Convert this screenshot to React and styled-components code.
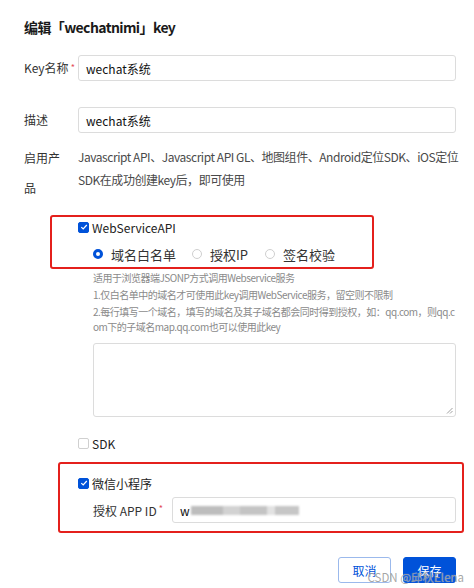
import React from "react";
import styled, { createGlobalStyle } from "styled-components";

const GlobalStyle = createGlobalStyle`
  body {
    margin: 0;
    background: #fff;
    font-family: "Noto Sans CJK SC", "Liberation Sans", sans-serif;
    color: #222;
  }
`;

const Page = styled.div`
  position: relative;
  width: 474px;
  height: 588px;
  box-sizing: border-box;
  padding: 17px 18px 0 24px;
  overflow: hidden;
`;

const Title = styled.h2`
  margin: 0 0 18px;
  font-size: 14px;
  line-height: 20px;
  font-weight: bold;
  letter-spacing: -0.6px;
  color: #1a1a1a;
`;

const Row = styled.div`
  display: flex;
  align-items: ${(p) => (p.$top ? "flex-start" : "center")};
  margin-bottom: ${(p) => p.$gap || 0}px;
`;

const Label = styled.div`
  width: 54px;
  flex: none;
  font-size: 12px;
  line-height: ${(p) => p.$lh || 20}px;
  color: #333;
  white-space: nowrap;
`;

const Star = styled.span`
  color: #e34d59;
  font-size: 9px;
  vertical-align: top;
  margin-left: 2px;
`;

const Input = styled.div`
  flex: 1;
  height: 26px;
  box-sizing: border-box;
  border: 1px solid #dcdcdc;
  border-radius: 3px;
  padding: 0 7px;
  display: flex;
  align-items: center;
  font-size: 12px;
  color: #111;
`;

const Products = styled.div`
  flex: 1;
  padding-top: 2px;
  font-size: 12px;
  line-height: 23px;
  letter-spacing: -0.45px;
  color: #4a4a4a;
  white-space: nowrap;
`;

const Block = styled.div`
  position: relative;
  margin: ${(p) => p.$m || "0"};
  padding-left: 54px;
`;

const Highlight = styled.div`
  position: absolute;
  border: 2px solid #e4201c;
  border-radius: 3px;
  pointer-events: none;
`;

const Check = styled.div`
  display: flex;
  align-items: center;
  gap: 3px;
  height: 20px;
  font-size: 12px;
  color: #222;
`;

const Box = styled.span`
  width: 11px;
  height: 11px;
  box-sizing: border-box;
  border-radius: 2px;
  border: 1px solid ${(p) => (p.$on ? "#0052d9" : "#d0d0d0")};
  background: ${(p) => (p.$on ? "#0052d9" : "#fff")};
  display: inline-flex;
  align-items: center;
  justify-content: center;
`;

const Radios = styled.div`
  display: flex;
  height: 20px;
  align-items: center;
  margin: 7px 0 0 15px;
`;

const RadioItem = styled.div`
  display: flex;
  align-items: center;
  gap: 8px;
  width: ${(p) => p.$w}px;
  font-size: 13px;
  color: #333;
`;

const Dot = styled.span`
  width: 10px;
  height: 10px;
  box-sizing: border-box;
  border-radius: 50%;
  border: ${(p) => (p.$on ? "3px solid #0052d9" : "1px solid #cfcfcf")};
  background: #fff;
`;

const Help = styled.div`
  margin: 6px 0 0 15px;
  font-size: 10px;
  line-height: 15px;
  letter-spacing: -0.5px;
  color: #8a8a8a;
  white-space: nowrap;
  p {
    margin: 0 0 2px;
  }
`;

const TextArea = styled.div`
  position: relative;
  margin: 9px 0 0 15px;
  height: 74px;
  box-sizing: border-box;
  border: 1px solid #dcdcdc;
  border-radius: 3px;
`;

const Grip = styled.svg`
  position: absolute;
  right: 2px;
  bottom: 2px;
`;

const AppRow = styled.div`
  display: flex;
  align-items: center;
  margin: 4px 0 0 15px;
`;

const AppLabel = styled.div`
  width: 79px;
  flex: none;
  font-size: 12px;
  color: #333;
`;

const Blur = styled.span`
  display: inline-block;
  width: 108px;
  height: 9px;
  margin-left: 1px;
  background: linear-gradient(90deg, #bdbdbd 0 30%, #d2d2d2 30% 45%, #c4c4c4 45% 70%, #e2e2e2 70% 78%, #c6c6c6 78%);
  filter: blur(1px);
`;

const Actions = styled.div`
  display: flex;
  justify-content: flex-end;
  gap: 12px;
  margin-top: 34px;
`;

const Button = styled.button`
  width: 53px;
  height: 26px;
  border-radius: 3px;
  font-family: inherit;
  font-size: 12px;
  padding: 0;
  border: 1px solid ${(p) => (p.$primary ? "#0052d9" : "#9bb9ec")};
  background: ${(p) => (p.$primary ? "#0052d9" : "#fff")};
  color: ${(p) => (p.$primary ? "#fff" : "#0052d9")};
`;

const Watermark = styled.div`
  position: absolute;
  right: 10px;
  bottom: 4px;
  font-size: 11.5px;
  line-height: 14px;
  color: rgba(150, 150, 150, 0.85);
  text-shadow: 0 0 1px rgba(255, 255, 255, 0.6);
`;

const Tick = () => (
  <svg width="8" height="8" viewBox="0 0 8 8">
    <path d="M1.3 4.1 3.2 6 6.8 2" fill="none" stroke="#fff" strokeWidth="1.2" />
  </svg>
);

export default function App() {
  return (
    <Page>
      <GlobalStyle />
      <Title>编辑「wechatnimi」key</Title>
      <Row $gap={26}>
        <Label>
          Key名称<Star>*</Star>
        </Label>
        <Input>wechat系统</Input>
      </Row>
      <Row $gap={10}>
        <Label>描述</Label>
        <Input>wechat系统</Input>
      </Row>
      <Row $top>
        <Label $lh={30}>
          启用产
          <br />品
        </Label>
        <Products>
          Javascript API、Javascript API GL、地图组件、Android定位SDK、iOS定位
          <br />
          SDK在成功创建key后，即可使用
        </Products>
      </Row>

      <Block $m="14px 0 0">
        <Highlight style={{ top: -2, left: 26, width: 320, bottom: -5 }} />
        <Check>
          <Box $on>
            <Tick />
          </Box>
          WebServiceAPI
        </Check>
        <Radios>
          <RadioItem $w={99}>
            <Dot $on />
            域名白名单
          </RadioItem>
          <RadioItem $w={73}>
            <Dot />
            授权IP
          </RadioItem>
          <RadioItem $w={90}>
            <Dot />
            签名校验
          </RadioItem>
        </Radios>
      </Block>

      <Block>
        <Help>
          <p>适用于浏览器端JSONP方式调用Webservice服务</p>
          <p>1.仅白名单中的域名才可使用此key调用WebService服务，留空则不限制</p>
          <p>
            2.每行填写一个域名，填写的域名及其子域名都会同时得到授权，如：qq.com，则qq.c
            <br />
            om下的子域名map.qq.com也可以使用此key
          </p>
        </Help>
        <TextArea>
          <Grip width="7" height="7" viewBox="0 0 7 7">
            <path d="M6.5 1 1 6.5M6.5 4 4 6.5" stroke="#888" strokeWidth="0.8" />
          </Grip>
        </TextArea>
      </Block>

      <Block $m="16px 0 0">
        <Check>
          <Box />
          SDK
        </Check>
      </Block>

      <Block $m="20px 0 0">
        <Highlight style={{ top: -11, left: 34, right: -8, bottom: -10 }} />
        <Check>
          <Box $on>
            <Tick />
          </Box>
          微信小程序
        </Check>
        <AppRow>
          <AppLabel>
            授权 APP ID<Star>*</Star>
          </AppLabel>
          <Input>
            w<Blur />
          </Input>
        </AppRow>
      </Block>

      <Actions>
        <Button>取消</Button>
        <Button $primary>保存</Button>
      </Actions>
      <Watermark>CSDN @邱秋Elena</Watermark>
    </Page>
  );
}
